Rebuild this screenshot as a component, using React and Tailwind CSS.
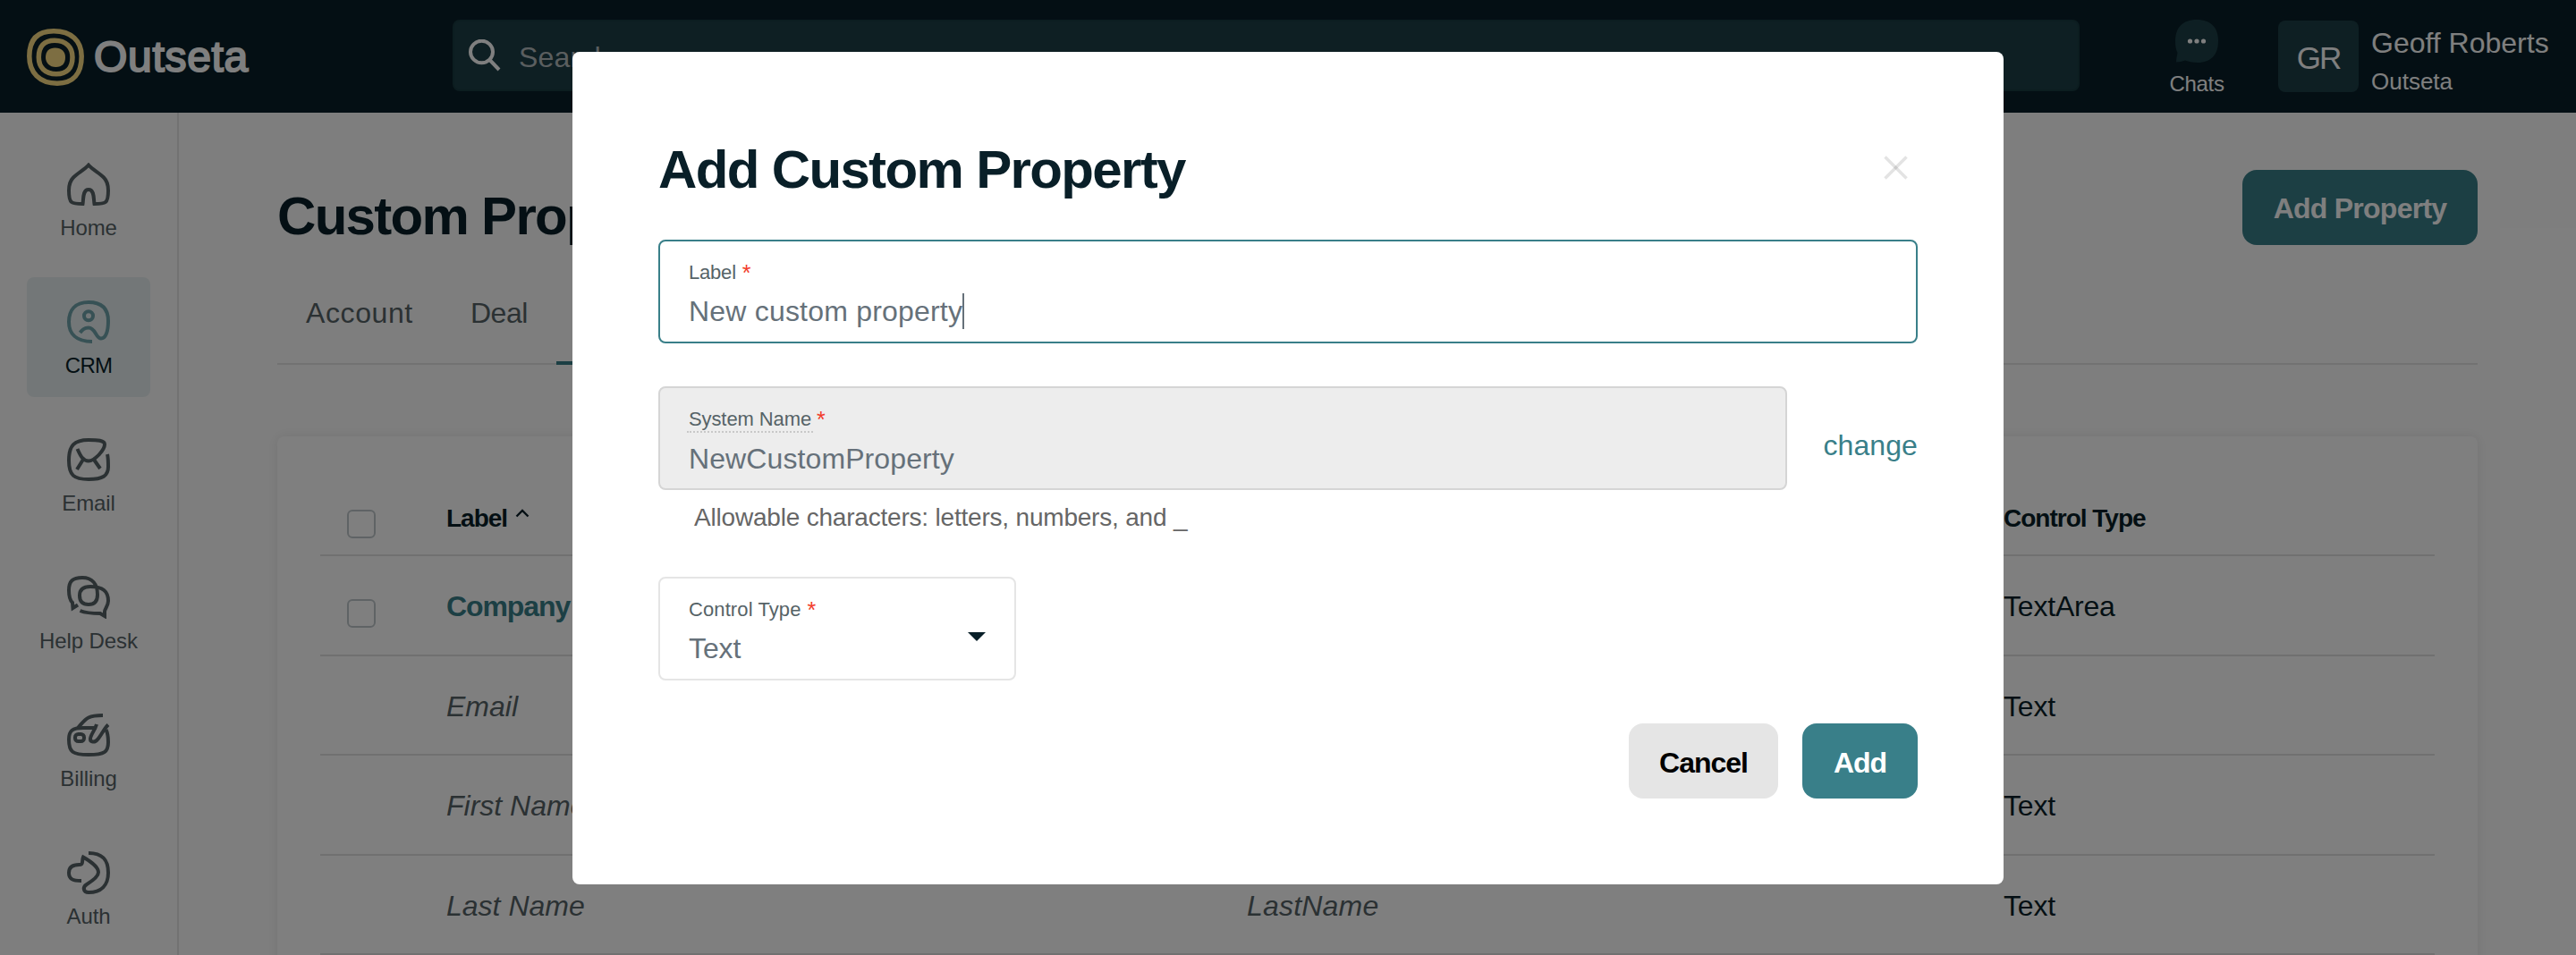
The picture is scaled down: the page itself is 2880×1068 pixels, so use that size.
import React from 'react';

const navItems = [
  { name: 'Home', icon: HomeIcon },
  { name: 'CRM', icon: CrmIcon, active: true },
  { name: 'Email', icon: EmailIcon },
  { name: 'Help Desk', icon: HelpDeskIcon },
  { name: 'Billing', icon: BillingIcon },
  { name: 'Auth', icon: AuthIcon },
];

const rows = [
  { label: 'Company', systemName: 'Company', type: 'TextArea', custom: true },
  { label: 'Email', systemName: 'Email', type: 'Text' },
  { label: 'First Name', systemName: 'FirstName', type: 'Text' },
  { label: 'Last Name', systemName: 'LastName', type: 'Text' },
];

function Icon({ children }) {
  return (
    <svg className="size-12" viewBox="0 0 48 48" fill="none" stroke="currentColor" strokeWidth="4">
      {children}
    </svg>
  );
}

function HomeIcon() {
  return (
    <Icon>
      <path d="M24 2.6C19 8 12 11.5 7 16.5C3 20.5 2 25 2 31C2 38 2.5 42 5 44C7.500 46 12 46 17.500 46C18.500 41 17 30 24 30C31 30 29.500 41 30.500 46C36 46 40.500 46 43 44C45.500 42 46 38 46 31C46 25 45 20.500 41 16.500C36 11.500 29 8 24 2.600Z" />
    </Icon>
  );
}

function CrmIcon() {
  return (
    <Icon>
      <path d="M28 46C10 46 2 37 2 24C2 11 9 2 24 2C39 2 46 9 46 23C46 35 43 42.500 38 42.500C32 42.500 32 30.500 24 30.500C19 30.500 17 33 14.500 36" />
      <circle cx="24" cy="17.300" r="5" />
    </Icon>
  );
}

function EmailIcon() {
  return (
    <Icon>
      <path d="M45 18C46 22 46 28 46 32C46 42 40 46 24 46C8 46 2 42 2 25C2 8 8 2 24 2C34 2 42 2.500 42 7C42 13 31 25.500 24 25.500C18 25.500 15 20 11.500 12" />
      <path d="M18.500 23L11 35M30 24L37 34" />
    </Icon>
  );
}

function HelpDeskIcon() {
  return (
    <Icon>
      <path d="M12 32.500L6.500 36L6 30C3 27 2 22 2 16C2 6 6 2 17 2C28 2 34 9 34 21C34 28 31 32 24 32C17 32 14 28 14 22C14 15 18 12 26 12C40 12 46 17 46 28C46 34 42 37 42 40L42 45L37 42C30 42 22 42 14.500 39" />
    </Icon>
  );
}

function BillingIcon() {
  return (
    <Icon>
      <path d="M40 2C22 2 21 6 12 16" />
      <path d="M33 16H18C6 16 2 19 2 29C2 43 6 46 24 46C42 46 46 43 46 32C46 26 45.500 22 43.500 18" />
      <path d="M33 12C31 19 26 24 26 28.500C26 32 31 33 34 29C38 25 41 17 46 12.500" />
      <rect x="9" y="23" width="10" height="8" rx="3.500" />
    </Icon>
  );
}

function AuthIcon() {
  return (
    <Icon>
      <path d="M24 2C40 2 46 10 46 24C46 38 38 46 24 46C18 46 17 40 22 37C30 32 35 28 35 23.500C35 18 26 11 18 6.500C16 11 19 15 13.500 15C6 15 2 18 2 24C2 31 6 33 16 33" />
    </Icon>
  );
}

function Logo() {
  return (
    <div className="flex items-center">
      <svg className="size-16 text-[#fbdc84]" viewBox="0 0 64 64" fill="none" stroke="currentColor" strokeWidth="5.500">
        <path d="M30 2.800C50 2.800 61.200 14 61.200 31C61.200 50 52 61.200 34 61.200C14 61.200 2.800 49 2.800 31C2.800 12 12 2.800 30 2.800Z" />
        <path d="M31 13.200C44 13.200 51 21 51 32C51 44 45 50.800 33 50.800C20 50.800 13.300 43 13.300 32C13.300 20 19 13.200 31 13.200Z" />
        <path stroke="none" fill="currentColor" d="M31.500 21.500C39 21.500 43 26 43 32C43 39 39.500 43 32.500 43C25 43 21 38 21 32C21 25.500 25 21.500 31.500 21.500Z" />
      </svg>
      <span className="ml-[11px] text-[48px] leading-[56px] tracking-[0.7px] text-white [-webkit-text-stroke:2px_white]">Outseta</span>
    </div>
  );
}

function Header() {
  return (
    <header className="flex h-[126px] bg-[#091f28]">
      <div className="w-[506px] pl-[30px] pt-8">
        <Logo />
      </div>
      <div className="mt-[22px] flex h-20 w-[1819px] items-center rounded-lg border-2 border-[#193a41] bg-[#1c3e46] pl-4">
        <svg className="size-9" viewBox="0 0 36 36" fill="none" stroke="white" strokeWidth="4">
          <ellipse cx="14.500" cy="14" rx="12.500" ry="12.300" />
          <path d="M23.500 23L34 34" />
        </svg>
        <span className="ml-5 pt-1 text-[32px] leading-9 tracking-[0.2px] text-[#b5bcbe]">Search</span>
      </div>
      <div className="ml-[91px] mt-[22px] flex w-20 flex-col items-center">
        <svg className="size-12" viewBox="0 0 48 48" fill="#1c3e46">
          <path d="M24 0C40 0 48 9 48 24C48 39 40 48 25 48C19 48 15 47 11 45.500C8 46.500 4 47.500 1 47.500C1 44 2 40 2.500 37C0.500 33 0 29 0 24C0 9 8 0 24 0Z" />
          <g fill="white">
            <circle cx="16.500" cy="24" r="2.600" />
            <circle cx="24" cy="24" r="2.600" />
            <circle cx="31.500" cy="24" r="2.600" />
          </g>
        </svg>
        <span className="mt-[10px] text-[24px] leading-7 tracking-[-0.3px] text-white">Chats</span>
      </div>
      <div className="ml-[51px] mt-[23px] flex h-20 w-[90px] items-center justify-center rounded-lg bg-[#1c3e46] pt-1 text-[35px] tracking-[-2px] text-white">
        GR
      </div>
      <div className="ml-[14px] mt-[28px] text-white">
        <div className="text-[32px] leading-10">Geoff Roberts</div>
        <div className="mt-[3px] text-[26px] leading-10">Outseta</div>
      </div>
    </header>
  );
}

function Sidebar() {
  return (
    <nav className="flex w-[200px] shrink-0 flex-col gap-5 border-r-2 border-[#e5e5e5] pl-[30px] pt-[30px]">
      {navItems.map(({ name, icon: NavIcon, active }) => (
        <a
          key={name}
          className={
            active
              ? 'flex h-[134px] w-[138px] flex-col items-center rounded-lg bg-[#e7eff0] pt-[26px] text-[#6fa3aa]'
              : 'flex h-[134px] w-[138px] flex-col items-center rounded-lg pt-[26px] text-[#566367]'
          }
        >
          <NavIcon />
          <span
            className={
              active
                ? 'mt-[11px] text-[24px] leading-7 tracking-[-0.8px] whitespace-nowrap text-[#091f28]'
                : 'mt-[11px] text-[24px] leading-7 tracking-[-0.1px] whitespace-nowrap'
            }
          >
            {name}
          </span>
        </a>
      ))}
    </nav>
  );
}

function Checkbox() {
  return <div className="ml-[30px] size-8 rounded-md border-2 border-[#bfc7cb]" />;
}

function PropertyTable() {
  return (
    <div className="mt-20 h-[700px] rounded-lg bg-white px-12 pt-9 shadow-[0_0_14px_rgba(0,0,0,0.09)]">
      <div className="grid h-[98px] grid-cols-[141px_895px_846px_1fr] border-b-2 border-[#e0e0e0] text-[28px] font-bold leading-8 tracking-[-1px] text-[#091f28]">
        <div className="pt-[46px]">
          <Checkbox />
        </div>
        <div className="flex pt-[40px]">
          Label
          <svg className="ml-[9px] mt-[4px] h-3 w-4" viewBox="0 0 16 12" fill="none" stroke="currentColor" strokeWidth="2.400">
            <path d="M1.500 9.500L8 3L14.500 9.500" />
          </svg>
        </div>
        <div className="pt-[40px]">System Name</div>
        <div className="pt-[40px]">Control Type</div>
      </div>
      {rows.map((row) => (
        <div
          key={row.label}
          className="grid h-[111.5px] grid-cols-[141px_895px_846px_1fr] border-b-2 border-[#e0e0e0] text-[32px] leading-9 text-[#091f28]"
        >
          <div className="pt-12">{row.custom && <Checkbox />}</div>
          <div
            className={
              row.custom
                ? 'pt-[38px] font-bold tracking-[-1.1px] text-[#397f89]'
                : 'pt-[38px] italic text-[#566367]'
            }
          >
            {row.label}
          </div>
          <div className="pt-[38px] italic tracking-[0.2px] text-[#566367]">{row.systemName}</div>
          <div className="pt-[38px] tracking-[-0.2px]">{row.type}</div>
        </div>
      ))}
    </div>
  );
}

function Page() {
  return (
    <main className="w-[2570px] pl-[110px]">
      <div className="flex h-[150px] justify-between pt-16">
        <h1 className="pt-[16px] text-[60px] font-bold leading-[72px] tracking-[-1.7px] text-[#091f28]">Custom Properties</h1>
        <button className="h-[84px] w-[263px] rounded-2xl bg-[#397f89] pt-0.5 text-[32px] font-bold tracking-[-0.75px] text-white">
          Add Property
        </button>
      </div>
      <div className="mt-[44px] flex h-[88px] border-b-2 border-[#e4e4e4] text-[32px] leading-9 text-[#566367]">
        <div className="w-[184px] pl-8 pt-3 tracking-[0.6px]">Account</div>
        <div className="w-[128px] pl-8 pt-3 tracking-[-0.5px]">Deal</div>
        <div className="-mb-0.5 w-[160px] border-b-4 border-[#397f89] pl-8 pt-3 text-[#091f28]">Person</div>
      </div>
      <PropertyTable />
    </main>
  );
}

function Required() {
  return <span className="ml-[7px] text-[25px] text-[#f23c2b]">*</span>;
}

function AddPropertyModal() {
  return (
    <div className="flex h-[931px] w-[1600px] flex-col rounded-lg bg-white px-24 font-normal">
      <div className="flex items-start justify-between">
        <h2 className="mt-[96px] text-[60px] font-bold leading-[72px] tracking-[-1.65px] text-[#091f28]">Add Custom Property</h2>
        <svg className="mr-[11px] mt-[116px] size-[27px]" viewBox="0 0 27 27" stroke="#000000" strokeOpacity="0.110" strokeWidth="3.500">
          <path d="M1.500 1.500L25.500 25.500" />
          <path d="M25.500 1.500L1.500 25.500" />
        </svg>
      </div>

      <div className="mt-[42px] h-[116px] rounded-lg border-2 border-[#397f89] pl-8 pt-[21px]">
        <div className="flex text-[22px] leading-7 tracking-[-0.2px] text-[#566367]">
          Label
          <Required />
        </div>
        <div className="mt-[9px] flex text-[32px] leading-10 tracking-[0.2px] text-[#66717a]">
          New custom property
          <span className="h-10 w-0.5 bg-[#66717a]" />
        </div>
      </div>

      <div className="mt-12 flex items-center justify-between">
        <div className="h-[116px] w-[1262px] rounded-lg border-2 border-[#d5d5d5] bg-[#ededed] pl-8 pt-[21px]">
          <div className="flex text-[22px] leading-7 tracking-[-0.1px] text-[#566367]">
            <span className="-ml-0.5 h-[29px] border-b-2 border-dotted border-[#c8c8c8] px-0.5">System Name</span>
            <span className="-ml-[3px]">
              <Required />
            </span>
          </div>
          <div className="mt-[8px] text-[32px] leading-10 tracking-[0.1px] text-[#66717a]">NewCustomProperty</div>
        </div>
        <a className="pt-[15px] text-[32px] leading-10 tracking-[0.1px] text-[#397f89]">change</a>
      </div>
      <p className="mt-[13px] pl-10 text-[28px] leading-9 tracking-[-0.2px] text-[#666666]">Allowable characters: letters, numbers, and _</p>

      <div className="mt-12 flex h-[116px] w-[400px] justify-between rounded-lg border-2 border-[#e5e5e5] pl-8 pr-8 pt-[21px]">
        <div>
          <div className="flex text-[22px] leading-7 tracking-[0.1px] text-[#566367]">
            Control Type
            <Required />
          </div>
          <div className="mt-[9px] text-[32px] leading-10 tracking-[-0.1px] text-[#66717a]">Text</div>
        </div>
        <svg className="mt-[39px] h-[10px] w-5" viewBox="0 0 20 10" fill="#091f28">
          <path d="M0 0H20L10 10Z" />
        </svg>
      </div>

      <div className="mt-12 flex justify-end gap-[27px] text-[32px] font-bold tracking-[-1px]">
        <button className="h-[84px] w-[167px] rounded-2xl bg-[#e5e5e5] pt-[3px] text-black">Cancel</button>
        <button className="h-[84px] w-[129px] rounded-2xl bg-[#397f89] pt-[3px] text-white">Add</button>
      </div>
    </div>
  );
}

export default function App() {
  return (
    <div className="relative h-[1068px] w-[2880px] overflow-hidden bg-[#fdfdfd] font-['Liberation_Sans',Arial,sans-serif]">
      <Header />
      <div className="flex h-[942px]">
        <Sidebar />
        <Page />
      </div>
      <div className="absolute inset-0 flex items-start justify-center bg-black/50 pt-[58px]">
        <AddPropertyModal />
      </div>
    </div>
  );
}
